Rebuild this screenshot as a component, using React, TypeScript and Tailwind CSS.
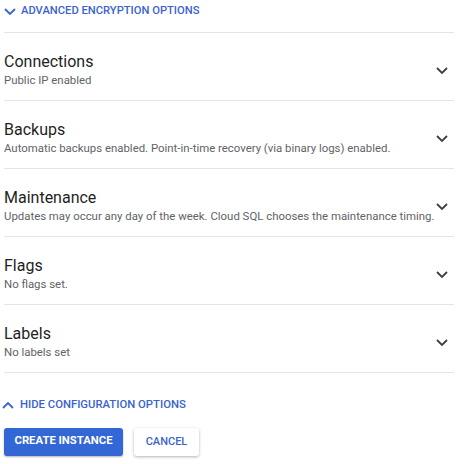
import React from 'react';

type Section = { title: string; summary: string };

const sections: Section[] = [
    { title: 'Connections', summary: 'Public IP enabled' },
    { title: 'Backups', summary: 'Automatic backups enabled. Point-in-time recovery (via binary logs) enabled.' },
    { title: 'Maintenance', summary: 'Updates may occur any day of the week. Cloud SQL chooses the maintenance timing.' },
    { title: 'Flags', summary: 'No flags set.' },
    { title: 'Labels', summary: 'No labels set' },
];

// small chevron, points down unless `up`
const Chevron: React.FC<{ up?: boolean; className?: string }> = ({ up, className }) => (
    <svg width="12" height="8" viewBox="0 0 12 8" className={className}>
        <path
            d={up ? 'M1 7 L6 2 L11 7' : 'M1 1 L6 6 L11 1'}
            fill="none"
            stroke="currentColor"
            strokeWidth="1.8"
        />
    </svg>
);

const App: React.FC = () => {
    return (
        <div className="w-[474px] h-[464px] bg-white font-['Roboto',sans-serif] overflow-hidden">
            <div className="w-[454px] pl-1">

                {/* Advanced encryption toggle */}
                <div className="h-[33px] flex items-center gap-[5px] text-[#3a63cf] border-b border-[#e4e4e4] pb-[9px]">
                    <Chevron />
                    <span className="text-[11.2px] font-medium">ADVANCED ENCRYPTION OPTIONS</span>
                </div>

                {/* Config sections */}
                {sections.map((s) => (
                    <div key={s.title} className="flex items-center justify-between border-b border-[#e4e4e4] pt-[19px] pb-[12px]">
                        <div>
                            <div className="text-[16px] leading-[20px] text-[#1f1f1f]">{s.title}</div>
                            <div className="text-[11.4px] leading-[16px] text-[#5f6368] whitespace-nowrap">{s.summary}</div>
                        </div>
                        <Chevron className="text-[#3c4043] mr-[6px] mt-[2px] shrink-0" />
                    </div>
                ))}

                {/* Footer */}
                <div className="flex items-center gap-[6px] text-[#3a63cf] mt-[24px] -ml-[2px]">
                    <Chevron up />
                    <span className="text-[11.3px] font-medium">HIDE CONFIGURATION OPTIONS</span>
                </div>

                <div className="flex items-center gap-[11px] mt-[14px]">
                    <button className="h-[28px] w-[119px] rounded-[3px] bg-[#3367d6] text-white text-[11.3px] font-bold shadow-[0_1px_2px_rgba(0,0,0,0.3)]">
                        CREATE INSTANCE
                    </button>
                    <button className="h-[28px] w-[65px] rounded-[3px] bg-white text-[#3a63cf] text-[11px] font-medium shadow-[0_1px_3px_rgba(0,0,0,0.3)]">
                        CANCEL
                    </button>
                </div>
            </div>
        </div>
    );
};

export default App;
